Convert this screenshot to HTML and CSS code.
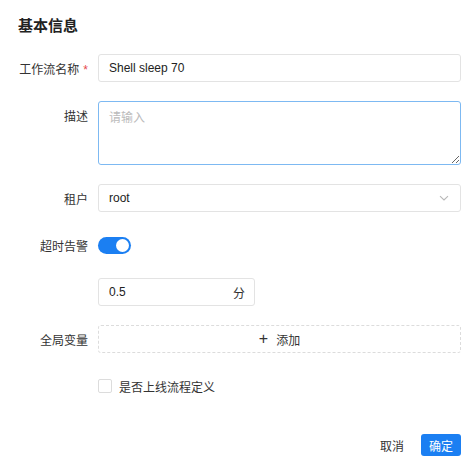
FILE: index.html
```html
<!DOCTYPE html>
<html lang="zh-CN">
    <head>
        <meta charset="UTF-8">
        <meta name="viewport" content="width=device-width, initial-scale=1.0">
        <title>基本信息</title>
        <link rel="stylesheet" href="styles.css">
    </head>
    <body>
        <div class="panel">
            <h2 class="panel__title">基本信息</h2>
            <form class="form">
                <div class="form__item">
                    <label class="form__label">工作流名称<span class="form__required">*</span></label>
                    <div class="form__control">
                        <input class="input" type="text" value="Shell sleep 70">
                    </div>
                </div>
                <div class="form__item form__item--top">
                    <label class="form__label">描述</label>
                    <div class="form__control">
                        <textarea class="textarea" placeholder="请输入"></textarea>
                    </div>
                </div>
                <div class="form__item">
                    <label class="form__label">租户</label>
                    <div class="form__control">
                        <div class="select">
                            <span>root</span>
                            <svg class="select__arrow" width="12" height="12" viewBox="0 0 12 12">
                                <path d="M2 4.2 L6 8 L10 4.2" fill="none" stroke="#b8b8b8" stroke-width="1.1"/>
                            </svg>
                        </div>
                    </div>
                </div>
                <div class="form__item">
                    <label class="form__label">超时告警</label>
                    <div class="form__control">
                        <span class="switch"><span class="switch__knob"></span></span>
                    </div>
                </div>
                <div class="form__item">
                    <label class="form__label"></label>
                    <div class="form__control">
                        <div class="number">
                            <span>0.5</span>
                            <span class="number__suffix">分</span>
                        </div>
                    </div>
                </div>
                <div class="form__item">
                    <label class="form__label">全局变量</label>
                    <div class="form__control">
                        <div class="add-button"><span class="add-button__plus">+</span>添加</div>
                    </div>
                </div>
                <div class="form__item">
                    <label class="form__label"></label>
                    <div class="form__control">
                        <label class="checkbox"><span class="checkbox__box"></span>是否上线流程定义</label>
                    </div>
                </div>
            </form>
            <div class="panel__footer">
                <button class="btn btn--text">取消</button>
                <button class="btn btn--primary">确定</button>
            </div>
        </div>
    </body>
</html>
```

FILE: styles.css
```css
*, *:before, *:after {
    box-sizing: border-box;
}

body {
    margin: 0;
    background: #fff;
    color: #333;
    font-family: "Liberation Sans", "Noto Sans CJK SC", sans-serif;
    font-size: 12px;
}

.panel {
    padding: 15px 13px 0 18px;
}

.panel__title {
    margin: 0;
    font-size: 15px;
    font-weight: 600;
    color: #222;
    line-height: 21px;
}

.form {
    margin-top: 18px;
}

.form__item {
    display: flex;
    align-items: center;
    min-height: 28px;
    margin-bottom: 19px;
}

.form__item:last-child {
    margin-bottom: 0;
}

.form__item--top {
    align-items: flex-start;
}

.form__item--top .form__label {
    padding-top: 6px;
}

.form__label {
    width: 72px;
    flex: none;
    text-align: right;
    padding-right: 2px;
    margin-right: 8px;
    color: #333;
    white-space: nowrap;
}

.form__required {
    color: #e5484d;
    margin-left: 4px;
}

.form__control {
    flex: 1;
}

.input,
.select,
.number {
    width: 100%;
    height: 28px;
    border: 1px solid #e3e3e3;
    border-radius: 3px;
    padding: 0 10px;
    font-family: inherit;
    font-size: 12px;
    color: #222;
    background: #fff;
    outline: 0;
}

.select,
.number {
    display: flex;
    align-items: center;
    justify-content: space-between;
}

.number {
    width: 157px;
}

.number__suffix {
    color: #333;
    margin-right: -1px;
}

.textarea {
    display: block;
    width: 100%;
    height: 64px;
    border: 1px solid #7db9f2;
    border-radius: 3px;
    padding: 6px 10px;
    font-family: inherit;
    font-size: 12px;
    outline: 0;
    resize: vertical;
}

.textarea::placeholder {
    color: #bbb;
}

.switch {
    display: block;
    width: 33px;
    height: 17px;
    border-radius: 9px;
    background: #1b7ff2;
    position: relative;
}

.switch__knob {
    position: absolute;
    right: 2px;
    top: 2px;
    width: 13px;
    height: 13px;
    border-radius: 50%;
    background: #fff;
}

.add-button {
    height: 28px;
    border: 1px dashed #dcdcdc;
    border-radius: 3px;
    display: flex;
    align-items: center;
    justify-content: center;
    color: #333;
}

.add-button__plus {
    font-size: 16px;
    margin-right: 8px;
    font-weight: 300;
}

.checkbox {
    display: flex;
    align-items: center;
    color: #333;
}

.checkbox__box {
    width: 14px;
    height: 14px;
    border: 1px solid #dcdcdc;
    border-radius: 2px;
    margin-right: 7px;
}

.panel__footer {
    display: flex;
    justify-content: flex-end;
    align-items: center;
    margin-top: 34px;
}

.btn {
    border: 0;
    font-family: inherit;
    font-size: 12px;
    height: 22px;
    padding: 0 8px;
    border-radius: 3px;
    cursor: pointer;
}

.btn--text {
    background: none;
    color: #333;
    margin-right: 9px;
}

.btn--primary {
    background: #1b7ff2;
    color: #fff;
}
```
